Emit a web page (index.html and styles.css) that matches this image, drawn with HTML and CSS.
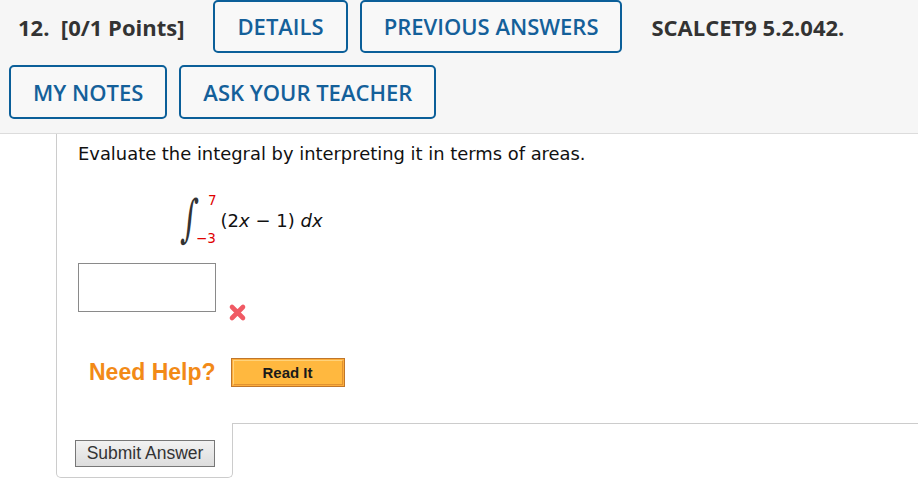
FILE: index.html
```html
<!DOCTYPE html>
<html>
<head>
<meta charset="utf-8">
<link rel="stylesheet" href="styles.css">
</head>
<body>
<div class="header">
  <div class="row row1">
    <span class="title">12.&nbsp; [0/1 Points]</span>
    <span class="btn">DETAILS</span>
    <span class="btn">PREVIOUS ANSWERS</span>
    <span class="code">SCALCET9 5.2.042.</span>
  </div>
  <div class="row row2">
    <span class="btn">MY NOTES</span>
    <span class="btn">ASK YOUR TEACHER</span>
  </div>
</div>
<div class="question">
  <div class="qbody">
    <p class="prompt">Evaluate the integral by interpreting it in terms of areas.</p>
    <div class="integral">
      <span class="intsign">∫</span>
      <span class="limits"><span class="upper">7</span><span class="lower">−3</span></span>
      <span class="expr">(2<i>x</i> − 1) <i>dx</i></span>
    </div>
    <div class="answer">
      <span class="inputbox"></span>
      <svg class="wrong" width="19" height="19" viewBox="0 0 19 19"><path d="M4 4 L15 15 M15 4 L4 15" stroke="#f05a64" stroke-width="4.6" stroke-linecap="round"/></svg>
    </div>
    <div class="help">
      <span class="needhelp">Need Help?</span>
      <span class="readit"><span class="readit-inner">Read It</span></span>
    </div>
  </div>
  <div class="tab">
    <span class="submit">Submit Answer</span>
  </div>
</div>
</body>
</html>
```
FILE: styles.css
```css
html, body {
  margin: 0;
  padding: 0;
  background: #ffffff;
}

.header {
  background: #f6f6f6;
  border-bottom: 1px solid #dcdcdc;
  padding: 0 0 14px 9px;
  font-family: "Open Sans", sans-serif;
}

.row {
  display: flex;
  align-items: center;
  gap: 12px;
}

.row2 {
  margin-top: 12px;
}

.title {
  font-weight: 700;
  font-size: 22px;
  color: #333333;
  margin-left: 9px;
  margin-right: 17px;
  white-space: pre;
}

.code {
  font-weight: 700;
  font-size: 22px;
  color: #333333;
  margin-left: 17px;
}

.btn {
  display: inline-block;
  border: 2px solid #0b5f99;
  border-radius: 5px;
  padding: 0 22px;
  height: 49px;
  line-height: 49px;
  font-size: 22px;
  font-weight: 600;
  color: #14609a;
  background: #f8f8f8;
}

.row2 .btn {
  height: 50px;
  line-height: 50px;
}

.question {
  margin-left: 56px;
}

.qbody {
  border-left: 1px solid #cccccc;
  border-bottom: 1px solid #cccccc;
  padding: 0 0 0 21px;
  height: 289px;
}

.prompt {
  margin: 0;
  padding-top: 9px;
  font-family: "DejaVu Sans", Verdana, sans-serif;
  font-size: 17.9px;
  line-height: 22px;
  color: #111111;
}

.integral {
  display: flex;
  align-items: center;
  margin: 26px 0 0 104px;
  height: 56px;
  font-family: "DejaVu Sans", Verdana, sans-serif;
  color: #111111;
}

.intsign {
  font-family: "DejaVu Serif", serif;
  font-size: 30px;
  line-height: 50px;
  display: inline-block;
  transform: scaleY(1.7) skewX(-8deg);
  color: #333333;
  width: 14px;
}

.limits {
  display: flex;
  flex-direction: column;
  justify-content: space-between;
  height: 52px;
  font-size: 13.5px;
  line-height: 14px;
  color: #e00000;
}

.upper {
  padding-left: 12px;
}

.expr {
  font-size: 18px;
  margin-left: 4px;
  margin-top: 2px;
}

.expr i {
  font-style: oblique;
}

.answer {
  display: flex;
  align-items: flex-end;
  margin-top: 16px;
}

.inputbox {
  display: block;
  width: 136px;
  height: 47px;
  border: 1px solid #8a8a8a;
  background: #ffffff;
}

.wrong {
  margin-left: 12px;
  margin-bottom: -10px;
}

.help {
  display: flex;
  align-items: center;
  margin-top: 46px;
  margin-left: 11px;
}

.needhelp {
  font-family: "Liberation Sans", Arial, sans-serif;
  font-weight: 700;
  font-size: 23px;
  color: #f28a17;
}

.readit {
  display: inline-block;
  margin-left: 15px;
  border: 1px solid #c0762a;
  background: #fdae3c;
  padding: 1px;
}

.readit-inner {
  display: block;
  width: 108px;
  height: 23px;
  line-height: 23px;
  border: 1px solid #e09232;
  border-top-color: #ffd27a;
  border-left-color: #ffd27a;
  background: #ffb83f;
  text-align: center;
  font-family: "Liberation Sans", Arial, sans-serif;
  font-weight: 700;
  font-size: 15px;
  color: #1a1a1a;
}

.tab {
  width: 177px;
  height: 55px;
  margin-top: -1px;
  background: #ffffff;
  border: 1px solid #cccccc;
  border-top: none;
  border-radius: 0 0 5px 5px;
  padding-left: 18px;
  box-sizing: border-box;
  padding-top: 17px;
}

.submit {
  display: inline-block;
  width: 138px;
  height: 25px;
  line-height: 25px;
  border: 1px solid #777777;
  background: linear-gradient(#f2f2f2, #dddddd);
  text-align: center;
  font-family: "Liberation Sans", Arial, sans-serif;
  font-size: 17.5px;
  color: #333333;
}
```
